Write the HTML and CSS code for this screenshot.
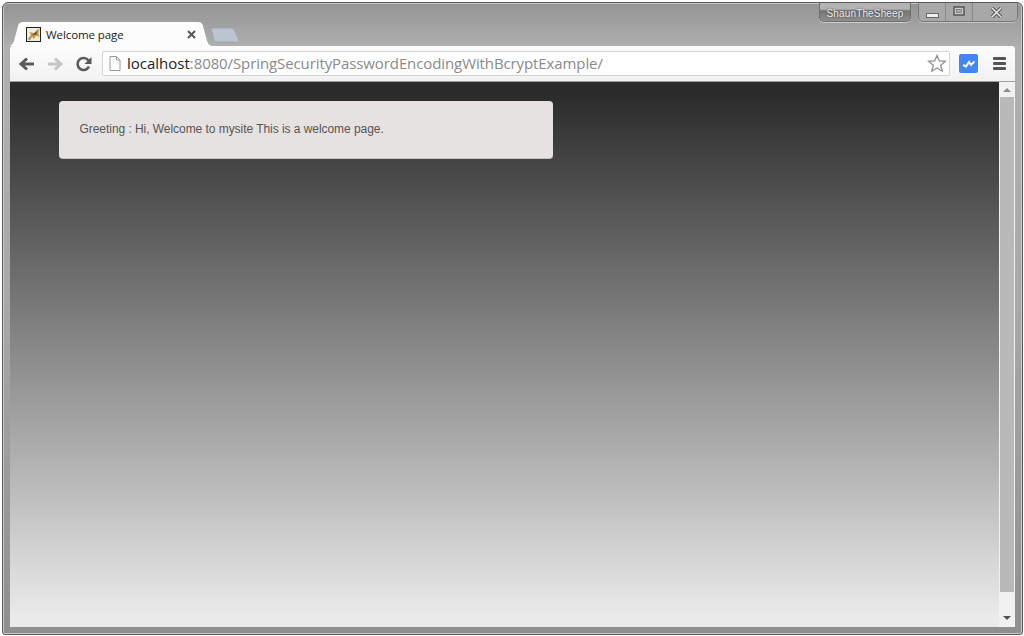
FILE: index.html
```html
<!DOCTYPE html>
<html lang="en">
<head>
<meta charset="utf-8">
<title>Welcome page</title>
<link rel="stylesheet" href="styles.css">
</head>
<body>
<div class="window">
  <div class="titlebar">
    <div class="tabs">
      <svg class="tab-shape" width="206" height="24" viewBox="0 0 206 24"><path d="M0 24 C3 24 5 22 6 19 L10 4 C11 1 12 0 15 0 H190 C193 0 194 1 195 4 L199 19 C200 22 202 24 206 24 Z" fill="#fcfcfc"/></svg>
      <div class="tab">
        <svg class="favicon" width="15" height="15" viewBox="0 0 15 15"><rect x=".5" y=".5" width="14" height="14" fill="#f1ece2" stroke="#222"/><path d="M1.500 12 L5 8 L3.500 5 L8 6 L11 3 L13.500 1.500 L12.500 6 L13.500 10 L10 8.500 L8 12 L6 10 L4 13.500 Z" fill="#c59a4a"/><path d="M6 8 L11 4 L10.500 8 Z" fill="#6d5a33"/></svg>
        <span class="tab-title">Welcome page</span>
        <svg class="tab-close" width="9" height="9" viewBox="0 0 9 9"><path d="M1 1 L8 8 M8 1 L1 8" stroke="#555" stroke-width="2"/></svg>
      </div>
      <svg class="new-tab" width="31" height="16" viewBox="0 0 31 16"><path d="M1 1 H21 C23 1 24 2 25 4 L29 14 C29.500 15 29 15 28 15 H7 C5 15 4.500 14 4 13 Z" fill="#bcc5cf" stroke="#9aa0a6" stroke-width=".7"/></svg>
    </div>
    <div class="user-badge">ShaunTheSheep</div>
    <div class="controls">
      <div class="ctl ctl-min"><svg width="13" height="5" viewBox="0 0 13 5"><rect x=".5" y=".5" width="12" height="4" fill="#eee" stroke="#666"/></svg></div>
      <div class="ctl ctl-max"><svg width="12" height="10" viewBox="0 0 12 10"><rect x="1" y="1" width="10" height="8" fill="#c8c8c8" stroke="#555" stroke-width="1.500"/><rect x="3.500" y="3.500" width="5" height="3" fill="#aaa" stroke="#666" stroke-width=".6"/></svg></div>
      <div class="ctl ctl-close"><svg width="13" height="11" viewBox="0 0 13 11"><path d="M2 1 L11 10 M11 1 L2 10" stroke="#555" stroke-width="3.600"/><path d="M2 1 L11 10 M11 1 L2 10" stroke="#e8e8e8" stroke-width="1.600"/></svg></div>
    </div>
  </div>
  <div class="toolbar">
    <svg class="nav back" width="18" height="16" viewBox="0 0 18 16"><path d="M16 8 H4 M9 2.500 L3 8 L9 13.500" fill="none" stroke="#5a5a5a" stroke-width="3"/></svg>
    <svg class="nav forward" width="18" height="16" viewBox="0 0 18 16"><path d="M2 8 H14 M9 2.500 L15 8 L9 13.500" fill="none" stroke="#c4c4c4" stroke-width="3"/></svg>
    <svg class="nav reload" width="16" height="16" viewBox="0 0 16 16"><path d="M13 10.500 A6 6 0 1 1 12.500 4.500" fill="none" stroke="#5a5a5a" stroke-width="2.600"/><path d="M15.500 1 V8 H8.500 Z" fill="#5a5a5a"/></svg>
    <div class="omnibox">
      <svg class="page-icon" width="12" height="15" viewBox="0 0 12 15"><path d="M1 .5 H7.500 L11 4 V14.500 H1 Z M7.500 .5 V4 H11" fill="#fff" stroke="#9a9a9a"/></svg>
      <span class="url"><span class="host">localhost</span>:8080/SpringSecurityPasswordEncodingWithBcryptExample/</span>
      <svg class="star" width="20" height="19" viewBox="0 0 20 19"><path d="M10 1.500 L12.300 7 L18.300 7.400 L13.700 11.300 L15.200 17.200 L10 14 L4.800 17.200 L6.300 11.300 L1.700 7.400 L7.700 7 Z" fill="#fff" stroke="#8e8e8e" stroke-width="1.300"/></svg>
    </div>
    <svg class="ext" width="19" height="19" viewBox="0 0 19 19"><rect width="19" height="19" rx="2" fill="#4285f4"/><path d="M4 11 L7 12.500 L10 8 L12 11 L15.500 7.500" fill="none" stroke="#fff" stroke-width="2"/></svg>
    <div class="menu"><i></i><i></i><i></i></div>
  </div>
  <div class="viewport">
    <main class="page">
      <div class="card">Greeting : Hi, Welcome to mysite This is a welcome page.</div>
    </main>
    <div class="scrollbar">
      <div class="arrow arrow-up"></div>
      <div class="thumb"></div>
      <div class="arrow arrow-down"></div>
    </div>
  </div>
</div>
</body>
</html>
```
FILE: styles.css
```css
html, body { margin: 0; padding: 0; background: #fff; }
body { width: 1024px; height: 636px; overflow: hidden; padding: 2px 1px 0 2px; box-sizing: border-box; }
.window {
  box-sizing: border-box;
  width: 1021px;
  height: 633px;
  border: 1px solid #5a5a5a;
  border-radius: 6px 6px 3px 3px;
  background: linear-gradient(#949494, #b0b0b0 46px, #a8a8a8 300px, #8f8f8f);
  padding: 0 7px 7px 7px;
  display: flex;
  flex-direction: column;
  box-shadow: inset 0 0 0 1px #c8c8c8;
}
.titlebar { height: 43px; display: flex; align-items: flex-start; flex: none; position: relative; }
.tabs { flex: 1; display: flex; position: relative; padding-top: 19px; height: 24px; }
.tab-shape { position: absolute; left: -2px; top: 19px; }
.tab {
  position: relative;
  width: 176px;
  height: 24px;
  margin-left: 16px;
  display: flex;
  align-items: center;
}
.favicon { flex: none; }
.tab-title { font: 11.5px/16px "Open Sans", "Noto Sans", sans-serif; letter-spacing: -.08px; color: #222; margin: 1px 0 0 5px; flex: 1; }
.tab-close { margin: 1px 6px 0 0; }
.new-tab { position: relative; margin: 5px 0 0 8px; }
.user-badge {
  width: 92px;
  height: 19px;
  box-sizing: border-box;
  border: 1px solid #6e6e6e;
  border-top: 0;
  border-radius: 0 0 5px 5px;
  background: linear-gradient(#b4b4b4 0, #b4b4b4 6px, #757575 8px, #8f8f8f);
  font: 10px/22px "Liberation Sans", sans-serif;
  letter-spacing: .15px;
  color: #eee;
  text-align: center;
  overflow: hidden;
  margin-right: 7px;
  text-shadow: 0 0 2px #333;
  box-shadow: 0 1px 0 #ccc;
}
.controls {
  display: flex;
  height: 18px;
  border: 1px solid #777;
  border-top: 0;
  border-radius: 0 0 5px 5px;
  margin-right: -3px;
  background: #a8a8a8;
  box-shadow: 0 1px 0 #c4c4c4;
}
.ctl { display: flex; align-items: center; justify-content: center; height: 18px; box-sizing: border-box; border-right: 1px solid #8a8a8a; }
.ctl:last-child { border-right: 0; }
.ctl-min { width: 27px; padding-top: 6px; }
.ctl-max { width: 27px; padding-bottom: 3px; }
.ctl-close { width: 44px; padding: 0 0 0 2px; }
.toolbar {
  height: 36px;
  flex: none;
  display: flex;
  align-items: center;
  box-sizing: border-box;
  background: linear-gradient(#fcfcfc, #f2f2f2);
  border-radius: 3px 3px 0 0;
  border-bottom: 1px solid #a0a0a0;
  padding: 0 9px 0 8px;
}
.nav { flex: none; }
.back { margin-right: 10px; }
.forward { margin-right: 12px; }
.reload { margin-right: 10px; }
.omnibox {
  flex: 1;
  height: 25px;
  margin-top: -1px;
  box-sizing: border-box;
  background: #fff;
  border: 1px solid #d4d4d4;
  border-radius: 2px;
  display: flex;
  align-items: center;
  padding: 0 2px 0 6px;
  margin-right: 9px;
}
.page-icon { flex: none; margin-right: 6px; }
.url { flex: 1; font: 15px/20px "Open Sans", "Noto Sans", sans-serif; color: #8a8a8a; white-space: nowrap; letter-spacing: -.1px; }
.host { color: #222; letter-spacing: 0; }
.star { flex: none; }
.ext { flex: none; margin-right: 15px; margin-top: -1px; }
.menu { display: flex; flex-direction: column; gap: 2px; width: 13px; margin-top: -1px; }
.menu i { display: block; height: 3px; background: #555; border-radius: 1px; }
.viewport { flex: 1; display: flex; min-height: 0; }
.page {
  flex: 1;
  background: linear-gradient(#2b2b2b 2%, #eaeaea 98%);
  padding: 19px 0 0 49px;
}
.card {
  width: 494px;
  height: 58px;
  box-sizing: border-box;
  background: #e7e2e2;
  border-radius: 4px;
  border-bottom: 1px solid #c5c5c5;
  padding: 21px 0 0 20.5px;
  font: 12px/14px "Liberation Sans", sans-serif;
  letter-spacing: -.05px;
  color: #555;
}
.scrollbar {
  width: 16px;
  flex: none;
  background: #f1f1f1;
  display: flex;
  flex-direction: column;
  align-items: center;
}
.arrow { width: 0; height: 0; border-left: 4px solid transparent; border-right: 4px solid transparent; flex: none; }
.arrow-up { border-bottom: 4px solid #8a8a8a; margin: 6px 0 5px; }
.arrow-down { border-top: 4px solid #505050; margin: auto 0 7px; }
.thumb { width: 14px; height: 495px; flex: none; background: #b9b9b9; }
```
